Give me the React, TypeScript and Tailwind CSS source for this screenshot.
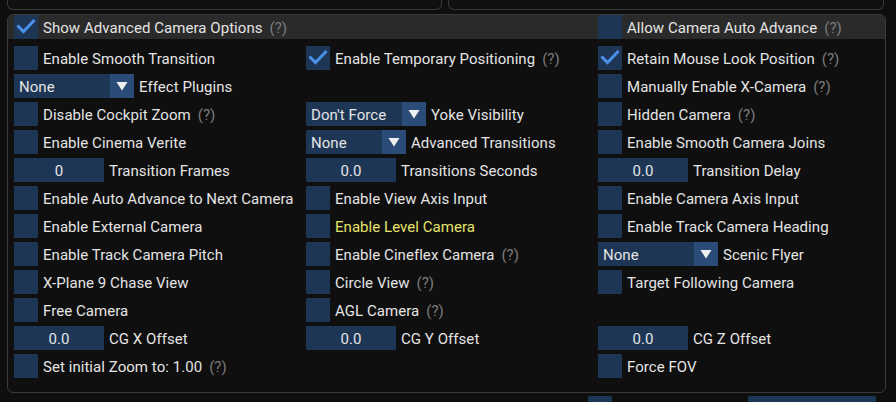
import React from "react";

type Cell =
  | { t: "cb"; label: string; checked?: boolean; help?: boolean; yellow?: boolean }
  | { t: "dd"; value: string; w: number; label: string }
  | { t: "in"; value: string; label: string }
  | { t: "empty" };

const Check = () => (
  <svg width="24" height="24" viewBox="0 0 24 24" className="block">
    <polyline points="4.5,11.5 9.5,16.5 19.5,6" fill="none" stroke="#4a90e8" strokeWidth="3" strokeLinecap="square" strokeLinejoin="miter" />
  </svg>
);

const CheckBox = ({ checked }: { checked?: boolean }) => (
  <div className="w-[24px] h-[24px] bg-[#1e3656] shrink-0">{checked ? <Check /> : null}</div>
);

const Help = () => <span className="ml-[7px] pt-[2px] text-[#7c7c7c]">(?)</span>;

const CellView = ({ c }: { c: Cell }) => {
  if (c.t === "empty") return <div className="h-[24px]" />;
  if (c.t === "cb")
    return (
      <div className="flex items-center h-[24px] whitespace-nowrap">
        <CheckBox checked={c.checked} />
        <span className={"ml-[5px] pt-[2px] " + (c.yellow ? "text-[#e6e36a]" : "")}>{c.label}</span>
        {c.help ? <Help /> : null}
      </div>
    );
  if (c.t === "dd")
    return (
      <div className="flex items-center h-[24px] whitespace-nowrap">
        <div className="flex h-[24px] bg-[#1e3656]" style={{ width: c.w }}>
          <span className="flex-1 pl-[5px] pt-[1px] leading-[24px]">{c.value}</span>
          <div className="w-[24px] h-[24px] bg-[#2b4c77] flex items-center justify-center">
            <svg width="12" height="10" viewBox="0 0 12 10">
              <polygon points="0.5,1 11.5,1 6,9.5" fill="#f0f0f0" />
            </svg>
          </div>
        </div>
        <span className="ml-[5px] pt-[2px]">{c.label}</span>
      </div>
    );
  return (
    <div className="flex items-center h-[24px] whitespace-nowrap">
      <div className="w-[90px] h-[24px] pt-[2px] bg-[#1e3656] flex items-center justify-center">{c.value}</div>
      <span className="ml-[5px] pt-[2px]">{c.label}</span>
    </div>
  );
};

const rows: Cell[][] = [
  [
    { t: "cb", label: "Enable Smooth Transition" },
    { t: "cb", label: "Enable Temporary Positioning", checked: true, help: true },
    { t: "cb", label: "Retain Mouse Look Position", checked: true, help: true },
  ],
  [
    { t: "dd", value: "None", w: 120, label: "Effect Plugins" },
    { t: "empty" },
    { t: "cb", label: "Manually Enable X-Camera", help: true },
  ],
  [
    { t: "cb", label: "Disable Cockpit Zoom", help: true },
    { t: "dd", value: "Don't Force", w: 120, label: "Yoke Visibility" },
    { t: "cb", label: "Hidden Camera", help: true },
  ],
  [
    { t: "cb", label: "Enable Cinema Verite" },
    { t: "dd", value: "None", w: 100, label: "Advanced Transitions" },
    { t: "cb", label: "Enable Smooth Camera Joins" },
  ],
  [
    { t: "in", value: "0", label: "Transition Frames" },
    { t: "in", value: "0.0", label: "Transitions Seconds" },
    { t: "in", value: "0.0", label: "Transition Delay" },
  ],
  [
    { t: "cb", label: "Enable Auto Advance to Next Camera" },
    { t: "cb", label: "Enable View Axis Input" },
    { t: "cb", label: "Enable Camera Axis Input" },
  ],
  [
    { t: "cb", label: "Enable External Camera" },
    { t: "cb", label: "Enable Level Camera", yellow: true },
    { t: "cb", label: "Enable Track Camera Heading" },
  ],
  [
    { t: "cb", label: "Enable Track Camera Pitch" },
    { t: "cb", label: "Enable Cineflex Camera", help: true },
    { t: "dd", value: "None", w: 120, label: "Scenic Flyer" },
  ],
  [
    { t: "cb", label: "X-Plane 9 Chase View" },
    { t: "cb", label: "Circle View", help: true },
    { t: "cb", label: "Target Following Camera" },
  ],
  [
    { t: "cb", label: "Free Camera" },
    { t: "cb", label: "AGL Camera", help: true },
    { t: "empty" },
  ],
  [
    { t: "in", value: "0.0", label: "CG X Offset" },
    { t: "in", value: "0.0", label: "CG Y Offset" },
    { t: "in", value: "0.0", label: "CG Z Offset" },
  ],
  [
    { t: "cb", label: "Set initial Zoom to: 1.00", help: true },
    { t: "empty" },
    { t: "cb", label: "Force FOV" },
  ],
];

export default function App() {
  return (
    <div className="w-[896px] h-[402px] overflow-hidden bg-[#0e0e0e] text-[#e4e4e4] text-[15px] tracking-[0.05px] font-['Roboto',sans-serif] leading-none">
      <div className="flex h-[10px]">
        <div className="ml-[7px] w-[435px] h-[10px] border border-t-0 border-[#3a3a3a] rounded-b-[6px] bg-[#101010]" />
        <div className="ml-[6px] w-[436px] h-[10px] border border-t-0 border-[#3a3a3a] rounded-b-[6px] bg-[#101010]" />
      </div>
      <div className="mt-[4px] ml-[7px] w-[879px] h-[379px] border border-[#3a3a3a] rounded-[6px] bg-[#0f0f0f] overflow-hidden">
        <div className="h-[24px] bg-[#2a2a2a] pl-[6px] grid grid-cols-[292px_292px_1fr]">
          <CellView c={{ t: "cb", label: "Show Advanced Camera Options", checked: true, help: true }} />
          <div />
          <CellView c={{ t: "cb", label: "Allow Camera Auto Advance", help: true }} />
        </div>
        <div className="mt-[7px] pl-[6px] grid grid-cols-[292px_292px_1fr] gap-y-[4px]">
          {rows.map((r, i) => (
            <React.Fragment key={i}>
              {r.map((c, j) => (
                <CellView key={j} c={c} />
              ))}
            </React.Fragment>
          ))}
        </div>
      </div>
      <div className="flex mt-[3px] h-[10px]">
        <div className="ml-[588px] w-[24px] h-[10px] bg-[#1e3656]" />
        <div className="ml-[136px] w-[128px] h-[10px] bg-[#1e3656]" />
      </div>
    </div>
  );
}
